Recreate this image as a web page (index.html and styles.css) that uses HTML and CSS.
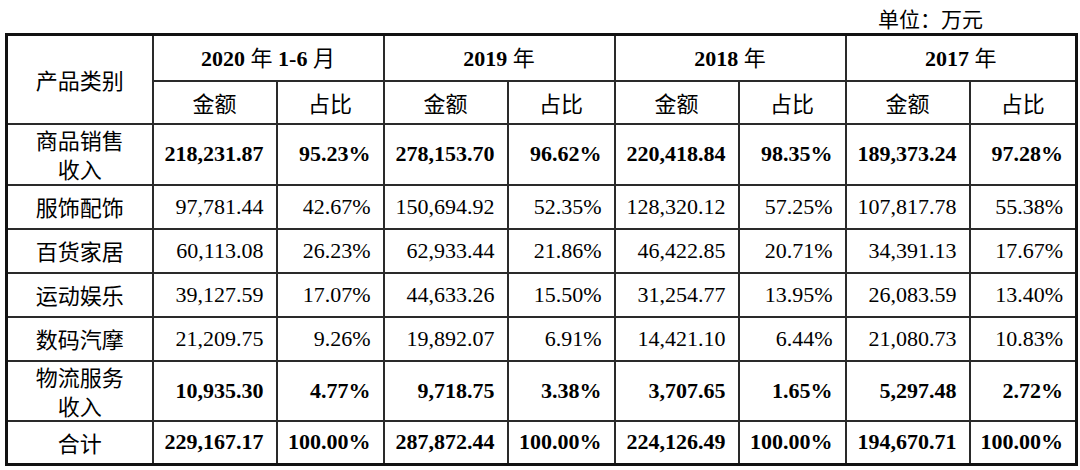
FILE: index.html
```html
<!DOCTYPE html>
<html lang="zh-CN">
<head>
<meta charset="utf-8">
<title>产品类别收入</title>
<link rel="stylesheet" href="styles.css">
</head>
<body>
<div class="page">
  <div class="unit">单位：万元</div>
  <table class="data">
    <colgroup>
      <col class="c-cat">
      <col class="c-amt"><col class="c-pct">
      <col class="c-amt"><col class="c-pct">
      <col class="c-amt"><col class="c-pct">
      <col class="c-amt"><col class="c-pct">
    </colgroup>
    <thead>
      <tr class="h1">
        <th rowspan="2" class="cat-head">产品类别</th>
        <th colspan="2" class="year">2020 <span class="cjk">年</span> 1-6 <span class="cjk">月</span></th>
        <th colspan="2" class="year">2019 <span class="cjk">年</span></th>
        <th colspan="2" class="year">2018 <span class="cjk">年</span></th>
        <th colspan="2" class="year">2017 <span class="cjk">年</span></th>
      </tr>
      <tr class="h2">
        <th>金额</th><th>占比</th>
        <th>金额</th><th>占比</th>
        <th>金额</th><th>占比</th>
        <th>金额</th><th>占比</th>
      </tr>
    </thead>
    <tbody>
      <tr class="tall bold">
        <td class="cat">商品销售<br>收入</td>
        <td>218,231.87</td><td>95.23%</td>
        <td>278,153.70</td><td>96.62%</td>
        <td>220,418.84</td><td>98.35%</td>
        <td>189,373.24</td><td>97.28%</td>
      </tr>
      <tr>
        <td class="cat">服饰配饰</td>
        <td>97,781.44</td><td>42.67%</td>
        <td>150,694.92</td><td>52.35%</td>
        <td>128,320.12</td><td>57.25%</td>
        <td>107,817.78</td><td>55.38%</td>
      </tr>
      <tr>
        <td class="cat">百货家居</td>
        <td>60,113.08</td><td>26.23%</td>
        <td>62,933.44</td><td>21.86%</td>
        <td>46,422.85</td><td>20.71%</td>
        <td>34,391.13</td><td>17.67%</td>
      </tr>
      <tr>
        <td class="cat">运动娱乐</td>
        <td>39,127.59</td><td>17.07%</td>
        <td>44,633.26</td><td>15.50%</td>
        <td>31,254.77</td><td>13.95%</td>
        <td>26,083.59</td><td>13.40%</td>
      </tr>
      <tr>
        <td class="cat">数码汽摩</td>
        <td>21,209.75</td><td>9.26%</td>
        <td>19,892.07</td><td>6.91%</td>
        <td>14,421.10</td><td>6.44%</td>
        <td>21,080.73</td><td>10.83%</td>
      </tr>
      <tr class="tall2 bold">
        <td class="cat">物流服务<br>收入</td>
        <td>10,935.30</td><td>4.77%</td>
        <td>9,718.75</td><td>3.38%</td>
        <td>3,707.65</td><td>1.65%</td>
        <td>5,297.48</td><td>2.72%</td>
      </tr>
      <tr class="bold">
        <td class="cat">合计</td>
        <td>229,167.17</td><td>100.00%</td>
        <td>287,872.44</td><td>100.00%</td>
        <td>224,126.49</td><td>100.00%</td>
        <td>194,670.71</td><td>100.00%</td>
      </tr>
    </tbody>
  </table>
</div>
</body>
</html>
```

FILE: styles.css
```css
html, body {
  margin: 0;
  padding: 0;
  background: #ffffff;
}

body {
  font-family: "Liberation Serif", "Noto Sans CJK SC", serif;
  font-size: 22px;
  color: #000;
}

.page {
  width: 1080px;
  padding-left: 5px;
  box-sizing: border-box;
}

.unit {
  height: 33px;
  line-height: 36px;
  text-align: right;
  padding-right: 97px;
  font-size: 21px;
  box-sizing: border-box;
  font-family: "Noto Sans CJK SC", sans-serif;
}

.data {
  border-collapse: collapse;
  table-layout: fixed;
  width: 1070px;
  border: 3px solid #111;
}

.c-cat { width: 146px; }
.c-amt { width: 124px; }
.c-pct { width: 107px; }

.data th,
.data td {
  border: 2px solid #2a2a2a;
  padding: 0 12px 0 4px;
  line-height: 26px;
  white-space: nowrap;
}

.data th {
  text-align: center;
  font-weight: normal;
  padding: 0;
  font-family: "Noto Sans CJK SC", sans-serif;
}

.data th.year {
  font-weight: bold;
  font-family: "Liberation Serif", "Noto Sans CJK SC", serif;
}

.data th.year .cjk {
  font-weight: normal;
  font-family: "Noto Sans CJK SC", sans-serif;
}

.h1 { height: 46px; }
.h2 { height: 43px; }

.data td {
  text-align: right;
}

.data tbody tr { height: 44px; }
.data tbody tr.tall { height: 61px; }
.data tbody tr.tall2 { height: 59px; }

.bold td {
  font-weight: bold;
}

.data td.cat {
  text-align: center;
  font-weight: normal;
  padding: 0;
  line-height: 29px;
  font-family: "Noto Sans CJK SC", sans-serif;
}
```
